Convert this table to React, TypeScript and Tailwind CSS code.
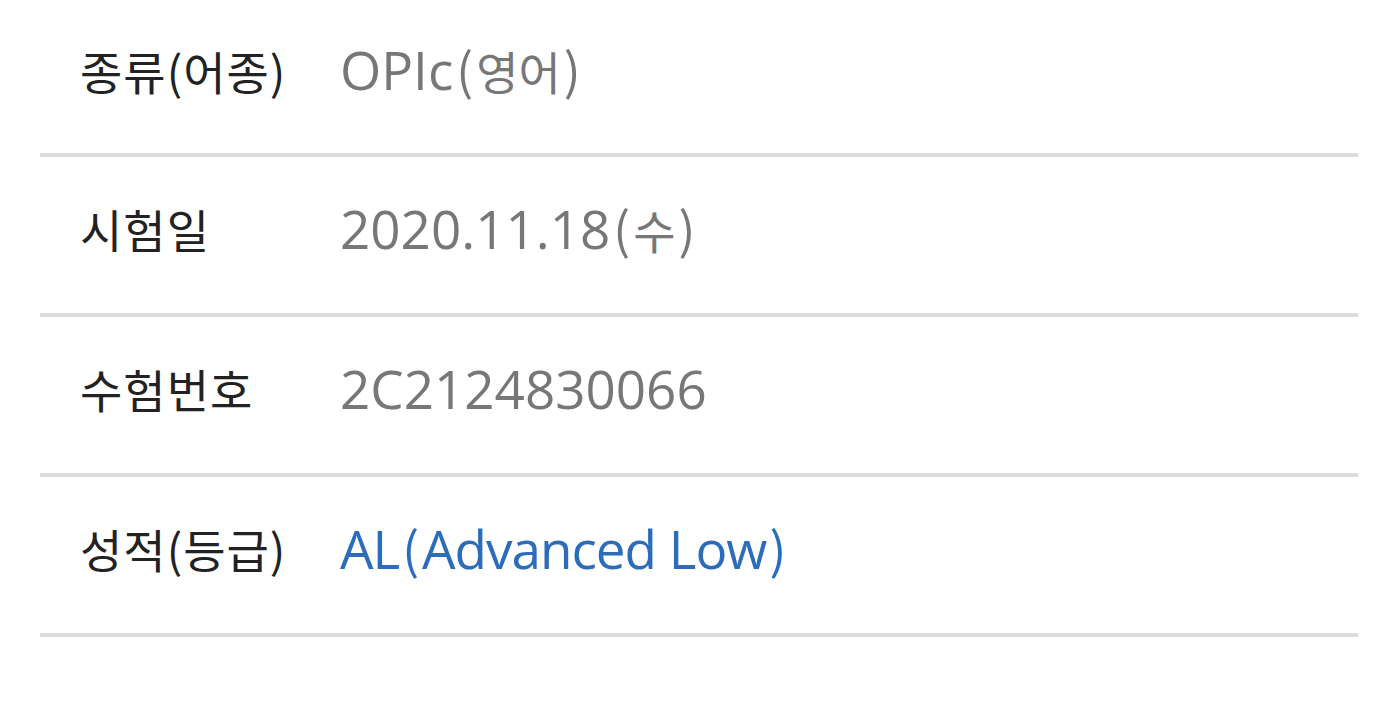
import React from "react";

const rows: { label: string; value: string; blue?: boolean }[] = [
  { label: "종류(어종)", value: "OPIc(영어)" },
  { label: "시험일", value: "2020.11.18(수)" },
  { label: "수험번호", value: "2C2124830066" },
  { label: "성적(등급)", value: "AL(Advanced Low)", blue: true },
];

function Value({ text, tight }: { text: string; tight?: boolean }) {
  const parts = text.split(/([가-힣]+|[()])/).filter((p) => p.length > 0);
  return (
    <>
      {parts.map((p, i) => {
        if (/^[가-힣]+$/.test(p)) {
          return (
            <span key={i} className="text-[46px] font-['Noto_Sans_CJK_KR',sans-serif]">
              {p}
            </span>
          );
        }
        if (p === "(" || p === ")") {
          return (
            <span key={i} className="text-[50px] mx-[3px] font-['Noto_Sans_CJK_KR',sans-serif]">
              {p}
            </span>
          );
        }
        return (
          <span
            key={i}
            className={`text-[53px] font-['Open_Sans',sans-serif] ${tight ? "tracking-[-1px]" : ""}`}
          >
            {p}
          </span>
        );
      })}
    </>
  );
}

export default function App() {
  return (
    <div className="w-[1396px] h-[715px] bg-white pl-[40px] pr-[38px] font-['Noto_Sans_CJK_KR','Noto_Sans',sans-serif]">
      {rows.map((r, idx) => (
        <div
          key={r.label}
          className={`${idx === 0 ? "h-[157px]" : "h-[160px]"} border-b-4 border-[#dcdcdc] flex items-center pb-[14px]`}
        >
          <div className="w-[300px] pl-[40px] text-[46px] text-[#222222] leading-none tracking-[1px]">{r.label}</div>
          <div className={`leading-none whitespace-nowrap ${r.blue ? "text-[#2c6dbb]" : "text-[#777777]"}`}>
            <Value text={r.value} tight={r.blue} />
          </div>
        </div>
      ))}
    </div>
  );
}
